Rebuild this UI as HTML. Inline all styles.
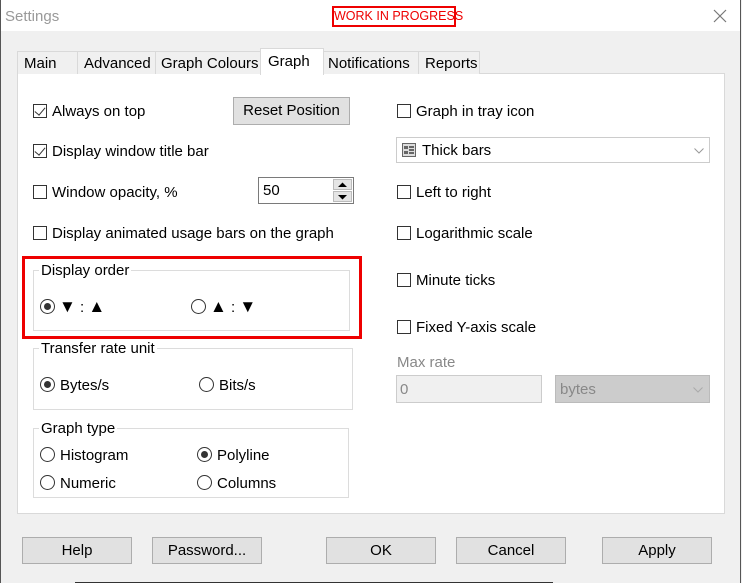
<!DOCTYPE html>
<html><head><meta charset="utf-8"><style>
*{margin:0;padding:0;box-sizing:border-box}
body{width:742px;height:583px;overflow:hidden;background:#fff;font-family:"Liberation Sans",sans-serif;font-size:15px;color:#000;position:relative}
.a{position:absolute;white-space:nowrap}
.t{line-height:20px}
.cb{position:absolute;width:14px;height:14px;border:1px solid #333;background:#fff}
.cb.on::after{content:"";position:absolute;left:3px;top:0px;width:5px;height:9px;border:solid #333;border-width:0 1.5px 1.5px 0;transform:rotate(40deg)}
.rb{position:absolute;width:15px;height:15px;border:1px solid #333;border-radius:50%;background:#fff}
.rb.on::after{content:"";position:absolute;left:3px;top:3px;width:7px;height:7px;border-radius:50%;background:#333}
.btn{position:absolute;background:#e1e1e1;border:1px solid #adadad;text-align:center;line-height:26px}
.grp{position:absolute;border:1px solid #dcdcdc}
.gl{position:absolute;background:#fff;padding:0 2px;line-height:17px}
.tab{position:absolute;top:51px;height:23px;border:1px solid #d9d9d9;border-bottom:none;background:#f0f0f0;line-height:23px;padding-left:6px}
.tri{font-size:17px}
</style></head><body>
<div class="a" style="left:0;top:31px;width:740px;height:552px;background:#f0f0f0"></div>
<div class="a" style="left:0;top:0;width:1px;height:583px;background:#555"></div>
<div class="a" style="left:740px;top:0;width:1px;height:583px;background:#555"></div>
<div class="a" style="left:741px;top:0;width:1px;height:583px;background:#f0f0f0"></div>
<div class="a" style="left:75px;top:582px;width:478px;height:1px;background:#333"></div>
<div class="a t" style="left:5px;top:7px;color:#999">Settings</div>
<div class="a" style="left:332px;top:6px;width:124px;height:21px;border:2px solid #e00;color:#e00;font-size:12.5px;line-height:17px;text-align:center">WORK IN PROGRESS</div>
<svg class="a" style="left:713px;top:9px" width="14" height="14"><path d="M1 1L13 13M13 1L1 13" stroke="#777" stroke-width="1.2"/></svg>

<div class="a" style="left:17px;top:73px;width:708px;height:441px;background:#fff;border:1px solid #d9d9d9"></div>
<div class="tab" style="left:17px;width:61px">Main</div>
<div class="tab" style="left:77px;width:79px">Advanced</div>
<div class="tab" style="left:155px;width:106px;padding-left:5px">Graph Colours</div>
<div class="tab" style="left:260px;top:48px;height:27px;width:64px;background:#fff;line-height:25px;padding-left:7px">Graph</div>
<div class="tab" style="left:323px;width:96px;padding-left:4px">Notifications</div>
<div class="tab" style="left:418px;width:62px">Reports</div>

<div class="cb on" style="left:33px;top:104px"></div><div class="a t" style="left:52px;top:102px">Always on top</div>
<div class="btn" style="left:233px;top:97px;width:117px;height:28px">Reset Position</div>
<div class="cb on" style="left:33px;top:144px"></div><div class="a t" style="left:52px;top:142px">Display window title bar</div>
<div class="cb" style="left:33px;top:185px"></div><div class="a t" style="left:52px;top:183px">Window opacity, %</div>
<div class="a" style="left:258px;top:177px;width:96px;height:27px;border:1px solid #7a7a7a;background:#fff"><span class="a t" style="left:4px;top:3px">50</span>
<div class="a" style="left:74px;top:1px;width:19px;height:11px;background:#e5e5e5;border:1px solid #bbb"></div>
<div class="a" style="left:74px;top:13px;width:19px;height:11px;background:#e5e5e5;border:1px solid #bbb"></div>
<svg class="a" style="left:78px;top:3px" width="11" height="20"><path d="M1 6L5.5 1.5L10 6Z M1 14L10 14L5.5 18.5Z" fill="#000"/></svg></div>
<div class="cb" style="left:33px;top:226px"></div><div class="a t" style="left:52px;top:224px">Display animated usage bars on the graph</div>

<div class="a" style="left:22px;top:256px;width:340px;height:83px;border:3px solid #e00"></div>
<div class="grp" style="left:33px;top:270px;width:317px;height:61px"></div>
<div class="gl" style="left:39px;top:262px">Display order</div>
<div class="rb on" style="left:40px;top:299px"></div><div class="a t" style="left:59px;top:297px"><span class="tri">▼</span> : <span class="tri">▲</span></div>
<div class="rb" style="left:191px;top:299px"></div><div class="a t" style="left:210px;top:297px"><span class="tri">▲</span> : <span class="tri">▼</span></div>

<div class="grp" style="left:33px;top:348px;width:320px;height:62px"></div>
<div class="gl" style="left:39px;top:340px">Transfer rate unit</div>
<div class="rb on" style="left:40px;top:377px"></div><div class="a t" style="left:60px;top:376px">Bytes/s</div>
<div class="rb" style="left:199px;top:377px"></div><div class="a t" style="left:219px;top:376px">Bits/s</div>

<div class="grp" style="left:33px;top:428px;width:316px;height:70px"></div>
<div class="gl" style="left:39px;top:420px">Graph type</div>
<div class="rb" style="left:40px;top:447px"></div><div class="a t" style="left:60px;top:446px">Histogram</div>
<div class="rb on" style="left:197px;top:447px"></div><div class="a t" style="left:217px;top:446px">Polyline</div>
<div class="rb" style="left:40px;top:475px"></div><div class="a t" style="left:60px;top:474px">Numeric</div>
<div class="rb" style="left:197px;top:475px"></div><div class="a t" style="left:217px;top:474px">Columns</div>

<div class="cb" style="left:397px;top:104px"></div><div class="a t" style="left:416px;top:102px">Graph in tray icon</div>
<div class="a" style="left:396px;top:137px;width:314px;height:26px;border:1px solid #ccc;background:#fff">
<svg class="a" style="left:5px;top:5px" width="14" height="14"><rect x="0.5" y="0.5" width="13" height="13" fill="#ddd" stroke="#666"/><path d="M2 3h4v3h-4zM2 8h4v3h-4zM7 3h5v2h-5zM7 6h5v2h-5zM7 9h5v2h-5z" fill="#666"/></svg>
<span class="a t" style="left:25px;top:3px">Thick bars</span>
<svg class="a" style="left:297px;top:10px" width="10" height="6"><path d="M0.5 0.5L5 5L9.5 0.5" stroke="#999" fill="none"/></svg></div>
<div class="cb" style="left:397px;top:185px"></div><div class="a t" style="left:416px;top:183px">Left to right</div>
<div class="cb" style="left:397px;top:226px"></div><div class="a t" style="left:416px;top:224px">Logarithmic scale</div>
<div class="cb" style="left:397px;top:273px"></div><div class="a t" style="left:416px;top:271px">Minute ticks</div>
<div class="cb" style="left:397px;top:320px"></div><div class="a t" style="left:416px;top:318px">Fixed Y-axis scale</div>
<div class="a t" style="left:397px;top:353px;color:#888">Max rate</div>
<div class="a" style="left:396px;top:375px;width:146px;height:28px;border:1px solid #ccc;background:#f0f0f0"><span class="a t" style="left:3px;top:4px;color:#888">0</span></div>
<div class="a" style="left:555px;top:375px;width:155px;height:28px;background:#ccc;border:1px solid #bbb"><span class="a t" style="left:4px;top:4px;color:#888">bytes</span>
<svg class="a" style="left:137px;top:11px" width="10" height="6"><path d="M0.5 0.5L5 5L9.5 0.5" stroke="#aaa" fill="none"/></svg></div>

<div class="btn" style="left:22px;top:537px;width:110px;height:27px">Help</div>
<div class="btn" style="left:152px;top:537px;width:110px;height:27px">Password...</div>
<div class="btn" style="left:326px;top:537px;width:110px;height:27px">OK</div>
<div class="btn" style="left:456px;top:537px;width:110px;height:27px">Cancel</div>
<div class="btn" style="left:602px;top:537px;width:110px;height:27px">Apply</div>
</body></html>
